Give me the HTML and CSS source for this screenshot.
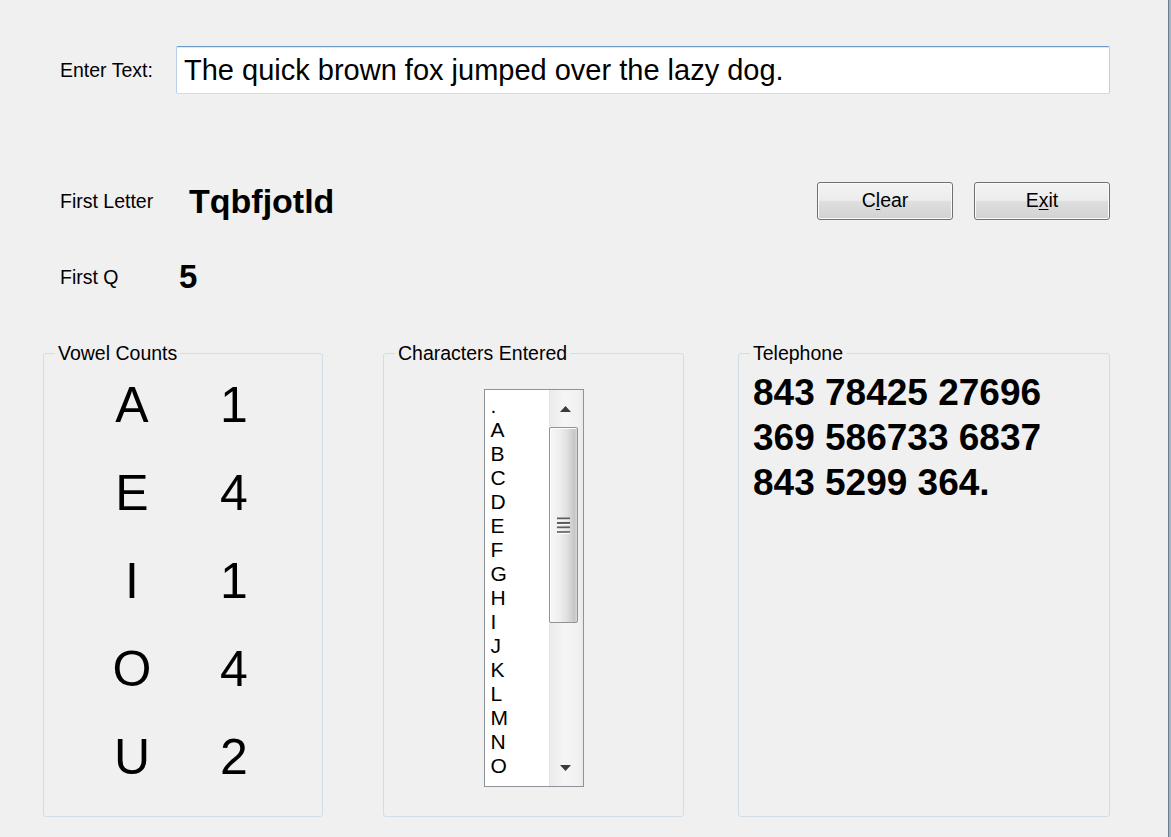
FILE: index.html
```html
<!DOCTYPE html>
<html lang="en">
<head>
<meta charset="utf-8">
<title>Text Form</title>
<link rel="stylesheet" href="styles.css">
</head>
<body>
<div class="window">
  <div class="form">
    <div class="row row-input">
      <label class="label label-enter" for="txt">Enter Text:</label>
      <input id="txt" class="textbox" type="text" value="The quick brown fox jumped over the lazy dog.">
    </div>
    <div class="row row-first">
      <span class="label label-first">First Letter</span>
      <span class="value">Tqbfjotld</span>
      <div class="buttons">
        <button class="btn" type="button">C<u>l</u>ear</button>
        <button class="btn" type="button">E<u>x</u>it</button>
      </div>
    </div>
    <div class="row row-q">
      <span class="label label-q">First Q</span>
      <span class="value value-q">5</span>
    </div>
    <div class="groups">
      <fieldset class="group group-vowels">
        <legend>Vowel Counts</legend>
        <div class="vowels">
          <span>A</span><span>1</span>
          <span>E</span><span>4</span>
          <span>I</span><span>1</span>
          <span>O</span><span>4</span>
          <span>U</span><span>2</span>
        </div>
      </fieldset>
      <fieldset class="group group-chars">
        <legend>Characters Entered</legend>
        <div class="listbox">
          <ul class="items">
            <li>.</li><li>A</li><li>B</li><li>C</li><li>D</li><li>E</li><li>F</li><li>G</li>
            <li>H</li><li>I</li><li>J</li><li>K</li><li>L</li><li>M</li><li>N</li><li>O</li>
          </ul>
          <div class="scrollbar">
            <div class="sb-btn">
              <svg width="11" height="6" viewBox="0 0 11 6"><polygon points="0,6 5.5,0 11,6" fill="#3a3a3a"/></svg>
            </div>
            <div class="sb-thumb">
              <svg width="13" height="17" viewBox="0 0 13 17">
                <rect x="0" y="0.5" width="13" height="2" fill="#5e5e5e"/>
                <rect x="0" y="2.5" width="13" height="1" fill="#ffffff"/>
                <rect x="0" y="5" width="13" height="2" fill="#5e5e5e"/>
                <rect x="0" y="7" width="13" height="1" fill="#ffffff"/>
                <rect x="0" y="9.5" width="13" height="2" fill="#5e5e5e"/>
                <rect x="0" y="11.5" width="13" height="1" fill="#ffffff"/>
                <rect x="0" y="14" width="13" height="2" fill="#7a7a7a"/>
                <rect x="0" y="16" width="13" height="1" fill="#ffffff"/>
              </svg>
            </div>
            <div class="sb-track"></div>
            <div class="sb-btn sb-btn-down">
              <svg width="11" height="6" viewBox="0 0 11 6"><polygon points="0,0 11,0 5.5,6" fill="#3a3a3a"/></svg>
            </div>
          </div>
        </div>
      </fieldset>
      <fieldset class="group group-phone">
        <legend>Telephone</legend>
        <div class="phone">843 78425 27696<br>369 586733 6837<br>843 5299 364.</div>
      </fieldset>
    </div>
  </div>
  <div class="frame-edge"></div>
</div>
</body>
</html>
```

FILE: styles.css
```css
html, body {
  margin: 0;
  padding: 0;
}

body {
  background: #f0f0f0;
  font-family: "Liberation Sans", Arial, sans-serif;
  color: #000;
}

.window {
  display: flex;
  width: 1171px;
  height: 837px;
  overflow: hidden;
}

.form {
  flex: 1;
  display: flex;
  flex-direction: column;
  padding-right: 58px;
}

.frame-edge {
  width: 3px;
  flex: none;
  background: linear-gradient(to right, #6e7e8f 0, #6e7e8f 1px, #a4b4c4 1px, #a4b4c4 100%);
}

.row {
  display: flex;
  align-items: center;
  padding-left: 60px;
}

.label {
  flex: none;
  font-size: 19.5px;
  line-height: 23px;
  white-space: nowrap;
}

.row-input {
  margin-top: 46px;
  height: 48px;
}

.label-enter {
  width: 116px;
}

.textbox {
  flex: 1;
  min-width: 0;
  height: 48px;
  box-sizing: border-box;
  margin: 0;
  padding: 0 7px;
  border: 1px solid;
  border-color: #6f9bc8 #b7d0e8 #c9ddf0 #b7d0e8;
  border-radius: 2px;
  box-shadow: inset 0 1px 0 #dce8f4;
  background: #fff;
  color: #000;
  font-family: "Liberation Sans", Arial, sans-serif;
  font-size: 29px;
  outline: none;
}

.row-first {
  margin-top: 88px;
  height: 38px;
}

.label-first {
  width: 129px;
}

.value {
  font-weight: bold;
  font-size: 34px;
  line-height: 38px;
  white-space: nowrap;
}

.buttons {
  margin-left: auto;
  display: flex;
  gap: 21px;
}

.btn {
  width: 136px;
  height: 38px;
  box-sizing: border-box;
  margin: 0;
  padding: 0 0 2px;
  border: 1px solid #707070;
  border-radius: 3px;
  background: linear-gradient(#f3f3f3 0%, #ececec 48%, #dedede 52%, #d2d2d2 100%);
  box-shadow: inset 0 0 0 1px #fbfbfb;
  color: #000;
  font-family: "Liberation Sans", Arial, sans-serif;
  font-size: 19.5px;
}

.btn u {
  text-decoration-thickness: 1px;
  text-underline-offset: 2px;
}

.row-q {
  margin-top: 38px;
  height: 38px;
}

.label-q {
  width: 119px;
}

.value-q {
  font-size: 33px;
}

.groups {
  margin-top: 46px;
  height: 475px;
  display: flex;
  padding-left: 43px;
}

.group {
  margin: 0;
  padding: 0 11px;
  min-width: 0;
  box-sizing: border-box;
  border: 1px solid #d3dde4;
  border-radius: 3px;
}

.group legend {
  padding: 0 3px;
  font-size: 19.5px;
  line-height: 23px;
  white-space: nowrap;
}

.group-vowels {
  width: 280px;
  flex: none;
}

.group-chars {
  width: 301px;
  flex: none;
  margin-left: 60px;
}

.group-phone {
  flex: 1;
  margin-left: 54px;
}

.vowels {
  display: grid;
  grid-template-columns: 60px 60px;
  column-gap: 42px;
  row-gap: 8px;
  margin-left: 47px;
  font-size: 50px;
  line-height: 80px;
  text-align: center;
}

.listbox {
  width: 100px;
  height: 398px;
  margin: 24px auto 0;
  box-sizing: border-box;
  border: 1px solid #8e9399;
  background: #fff;
  display: flex;
}

.items {
  list-style: none;
  margin: 0;
  padding: 4px 0 0 6px;
  flex: 1;
  box-sizing: border-box;
  font-size: 21px;
  line-height: 24px;
}

.scrollbar {
  width: 34px;
  flex: none;
  display: flex;
  flex-direction: column;
  background: linear-gradient(to right, #e2e2e2 0, #ececec 2px, #f5f5f5 45%, #f1f1f1 85%, #e9e9e9 100%);
}

.sb-btn {
  height: 37px;
  flex: none;
  display: flex;
  align-items: center;
  justify-content: center;
}

.sb-btn-down {
  height: 36px;
}

.sb-thumb {
  height: 196px;
  flex: none;
  margin: 0 5px 0 0;
  box-sizing: border-box;
  border: 1px solid #939393;
  border-radius: 2px;
  background: linear-gradient(to right, #f7f7f7 0%, #efefef 35%, #e2e2e2 60%, #cfcfcf 82%, #c6c6c6 90%, #d8d8d8 100%);
  box-shadow: inset 1px 1px 0 #fdfdfd;
  display: flex;
  align-items: center;
  justify-content: center;
}

.sb-track {
  flex: 1;
}

.phone {
  margin: 5px 0 0 3px;
  font-weight: bold;
  font-size: 37px;
  line-height: 45px;
  white-space: nowrap;
}
```
